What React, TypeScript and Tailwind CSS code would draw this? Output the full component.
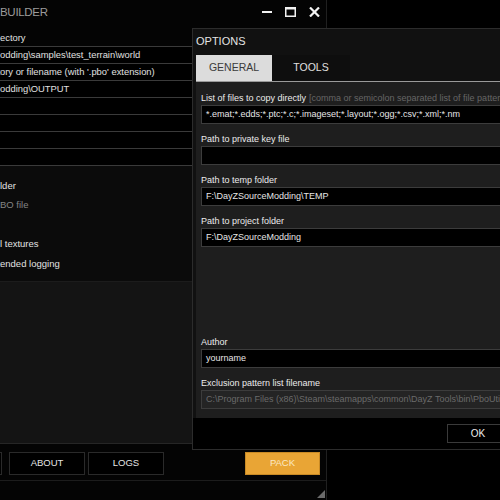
import type { ReactNode } from "react";

// text whose start is cut off by the left edge of the screen
function Cut({ hidden, shown }: { hidden: string; shown: string }) {
  return (
    <span className="flex whitespace-nowrap">
      <span className="w-0 flex justify-end">{hidden}</span>
      <span>{shown}</span>
    </span>
  );
}

function Row({ children }: { children?: ReactNode }) {
  return (
    <div className="h-[17px] border-b border-[#3a3a3a] flex items-center text-[9.4px] text-[#e0e0e0] bg-black">
      {children}
    </div>
  );
}

function Field({ label, value, dim, hint }: { label: string; value?: string; dim?: boolean; hint?: string }) {
  return (
    <div className="flex flex-col">
      <div className="h-[13px] flex items-center whitespace-nowrap text-[9px] text-[#ececec]">
        {label}
        {hint && <span className="ml-[3px] text-[#666]">{hint}</span>}
      </div>
      <div
        className={`h-[19px] border border-[#3c3c3c] flex items-center px-[4px] whitespace-nowrap overflow-hidden text-[9px] ${
          dim ? "bg-[#242424] text-[#6a6a6a]" : "bg-black text-[#e6e6e6]"
        }`}
      >
        {value}
      </div>
    </div>
  );
}

const checks = [
  { hidden: "Clear temp fo", shown: "lder", dim: false },
  { hidden: "Sign output P", shown: "BO file", dim: true },
  { hidden: "Binarize", shown: "", dim: false },
  { hidden: "Convert al", shown: "l textures", dim: false },
  { hidden: "Enable ext", shown: "ended logging", dim: false },
];

export default function App() {
  return (
    <div className="relative w-[500px] h-[500px] overflow-hidden bg-black font-['Liberation_Sans',Arial,sans-serif]">
      {/* main builder window */}
      <div className="absolute left-0 top-0 w-[327px] h-[500px] flex flex-col bg-[#040404] border-r border-[#202020]">
        <div className="h-[25px] flex items-center justify-between pr-[6px] pt-[1px]">
          <div className="text-[11.5px] text-[#9c9c9c] tracking-[-0.3px]">
            <Cut hidden="ADDON " shown="BUILDER" />
          </div>
          <div className="flex items-center gap-[13px] mt-[-2px]">
            <svg width="11" height="10" viewBox="0 0 11 10">
              <rect x="1" y="4" width="10" height="2" fill="#f2f2f2" />
            </svg>
            <svg width="11" height="10" viewBox="0 0 11 10">
              <rect x="0.75" y="0.75" width="9.5" height="8.5" fill="none" stroke="#f2f2f2" strokeWidth="1.5" />
              <rect x="0" y="0" width="11" height="2.5" fill="#f2f2f2" />
            </svg>
            <svg width="11" height="10" viewBox="0 0 11 10">
              <path d="M1 0.5 L10 9.5 M10 0.5 L1 9.5" stroke="#f4f4f4" strokeWidth="2.2" />
            </svg>
          </div>
        </div>
        <div className="h-[22px] flex items-end pb-[1px] text-[9.4px] text-[#e0e0e0] border-b border-[#3a3a3a]">
          <Cut hidden="Addon source dir" shown="ectory" />
        </div>
        <Row>
          <Cut hidden="F:\DayZSourceM" shown="odding\samples\test_terrain\world" />
        </Row>
        <Row>
          <Cut hidden="Output direct" shown="ory or filename (with '.pbo' extension)" />
        </Row>
        <Row>
          <Cut hidden="F:\DayZSourceM" shown="odding\OUTPUT" />
        </Row>
        <Row />
        <Row />
        <Row />
        <Row />
        <div className="h-[116px] bg-[#0b0b0b] flex flex-col pt-[10px] border-b border-[#1c1c1c]">
          {checks.map((c) => (
            <div
              key={c.hidden}
              className={`h-[19.5px] flex items-center text-[9.5px] ${c.dim ? "text-[#858585]" : "text-[#e2e2e2]"}`}
            >
              <Cut hidden={c.hidden} shown={c.shown} />
            </div>
          ))}
        </div>
        <div className="h-[162px] bg-[#141414] border-b border-[#262626]" />
        <div className="flex items-center h-[31px] pt-[8px]">
          <div className="w-[75px] h-[23px] ml-[-73px] border border-[#2a2a2a] bg-black" />
          <div className="w-[76px] h-[23px] ml-[7px] border border-[#2a2a2a] bg-black flex items-center justify-center text-[9.5px] text-[#e6e6e6]">
            ABOUT
          </div>
          <div className="w-[76px] h-[23px] ml-[3px] border border-[#2a2a2a] bg-black flex items-center justify-center text-[9.5px] text-[#e6e6e6]">
            LOGS
          </div>
          <div className="w-[75px] h-[23px] ml-[81px] bg-[#e9a535] border border-[#c98a25] flex items-center justify-center text-[9.5px] text-[#fbe9c4]">
            PACK
          </div>
        </div>
        <div className="h-[6px] border-b border-[#1c1c1c]" />
        <div className="flex-1 flex justify-end items-end pr-[1px] pb-[2px]">
          <svg width="8" height="8" viewBox="0 0 8 8">
            <path d="M8 0 L8 8 L0 8 Z" fill="#6a6a6a" />
          </svg>
        </div>
      </div>

      {/* options dialog */}
      <div className="absolute left-[192px] top-[28px] w-[330px] h-[422px] flex flex-col bg-[#111111] border border-[#2c2c2c]">
        <div className="h-[25px] flex items-center px-[3px] text-[11px] text-[#e4e4e4]">OPTIONS</div>
        <div className="flex px-[3px] pt-[1px]">
          <div className="flex flex-1 border-b border-[#9a9a9a]">
            <div className="w-[76px] h-[26px] bg-[#dcdcdc] flex items-center justify-center text-[10.5px] text-[#3a3a3a]">
              GENERAL
            </div>
            <div className="w-[78px] h-[26px] bg-[#0e0e0e] flex items-center justify-center text-[10.5px] text-[#e0e0e0]">
              TOOLS
            </div>
          </div>
        </div>
        <div className="flex-1 flex px-[3px]">
          <div className="flex-1 bg-[#1e1e1e] flex flex-col px-[5px] pt-[10px] pb-[9px]">
            <div className="flex flex-col gap-[9px]">
              <Field
                label="List of files to copy directly"
                hint="[comma or semicolon separated list of file patterns]"
                value="*.emat;*.edds;*.ptc;*.c;*.imageset;*.layout;*.ogg;*.csv;*.xml;*.nm"
              />
              <Field label="Path to private key file" />
              <Field label="Path to temp folder" value="F:\DayZSourceModding\TEMP" />
              <Field label="Path to project folder" value="F:\DayZSourceModding" />
            </div>
            <div className="mt-auto flex flex-col gap-[9px]">
              <Field label="Author" value="yourname" />
              <Field
                label="Exclusion pattern list filename"
                value="C:\Program Files (x86)\Steam\steamapps\common\DayZ Tools\bin\PboUtils\exclude.lst"
                dim
              />
            </div>
          </div>
        </div>
        <div className="h-[31px] bg-black flex items-center pl-[254px]">
          <div className="w-[62px] h-[19px] border border-[#3a3a3a] flex items-center justify-center text-[10px] text-[#ececec]">
            OK
          </div>
        </div>
      </div>
    </div>
  );
}
